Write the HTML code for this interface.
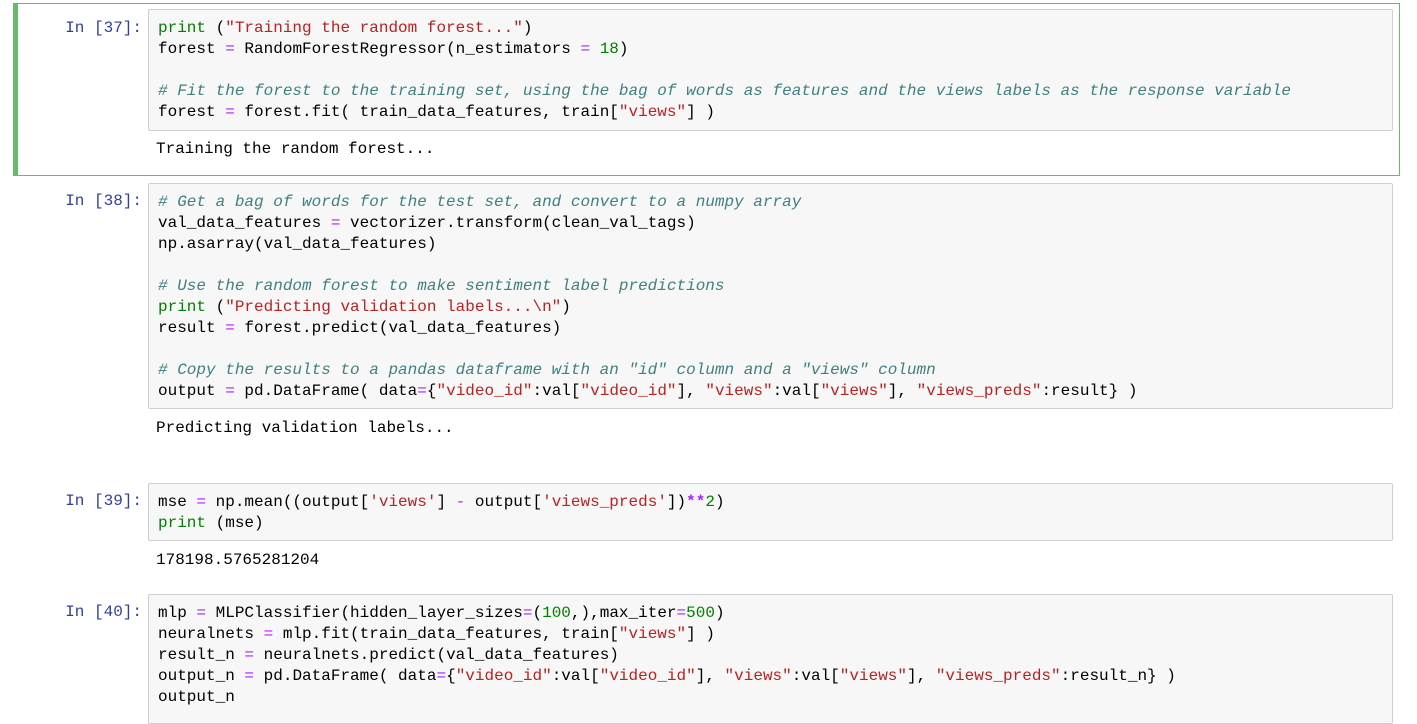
<!DOCTYPE html>
<html><head><meta charset="utf-8"><style>
body{margin:0;width:1417px;height:710px;overflow:hidden;background:#fff;position:relative;font-family:"Liberation Mono",monospace;font-size:16px;}
.sel{position:absolute;left:13px;top:3px;width:1387px;height:173px;border:1px solid #66bb6a;border-left:5px solid #66bb6a;box-sizing:border-box;}
.box{position:absolute;left:148px;width:1245px;background:#f7f7f7;border:1px solid #cfcfcf;border-radius:2px;box-sizing:border-box;padding:8px 0 6px 9px;}
pre{margin:0;font:inherit;line-height:21px;white-space:pre;color:#000;}
.p{position:absolute;left:0;width:142px;text-align:right;color:#303f9f;line-height:21px;}
.o{position:absolute;left:156px;line-height:21px;white-space:pre;}
.k{color:#008000}.s{color:#ba2121}.c{color:#408080;font-style:italic}.op{color:#aa22ff}.n{color:#008000}.b{color:#aa22ff;font-weight:bold}
</style></head><body>
<div class="sel"></div>
<div class="p" style="top:18px">In [37]:</div>
<div class="box" style="top:9px;height:122px"><pre><span class="k">print</span> (<span class="s">"Training the random forest..."</span>)
forest <span class="op">=</span> RandomForestRegressor(n_estimators <span class="op">=</span> <span class="n">18</span>)

<span class="c"># Fit the forest to the training set, using the bag of words as features and the views labels as the response variable</span>
forest <span class="op">=</span> forest.fit( train_data_features, train[<span class="s">"views"</span>] )</pre></div>
<div class="o" style="top:139px">Training the random forest...</div>

<div class="p" style="top:191px">In [38]:</div>
<div class="box" style="top:183px;height:226px"><pre><span class="c"># Get a bag of words for the test set, and convert to a numpy array</span>
val_data_features <span class="op">=</span> vectorizer.transform(clean_val_tags)
np.asarray(val_data_features)

<span class="c"># Use the random forest to make sentiment label predictions</span>
<span class="k">print</span> (<span class="s">"Predicting validation labels...\n"</span>)
result <span class="op">=</span> forest.predict(val_data_features)

<span class="c"># Copy the results to a pandas dataframe with an "id" column and a "views" column</span>
output <span class="op">=</span> pd.DataFrame( data<span class="op">=</span>{<span class="s">"video_id"</span>:val[<span class="s">"video_id"</span>], <span class="s">"views"</span>:val[<span class="s">"views"</span>], <span class="s">"views_preds"</span>:result} )</pre></div>
<div class="o" style="top:418px">Predicting validation labels...</div>

<div class="p" style="top:491px">In [39]:</div>
<div class="box" style="top:483px;height:58px"><pre>mse <span class="op">=</span> np.mean((output[<span class="s">'views'</span>] <span class="op">-</span> output[<span class="s">'views_preds'</span>])<span class="b">**</span><span class="n">2</span>)
<span class="k">print</span> (mse)</pre></div>
<div class="o" style="top:550px">178198.5765281204</div>

<div class="p" style="top:602px">In [40]:</div>
<div class="box" style="top:594px;height:130px"><pre>mlp <span class="op">=</span> MLPClassifier(hidden_layer_sizes<span class="op">=</span>(<span class="n">100</span>,),max_iter<span class="op">=</span><span class="n">500</span>)
neuralnets <span class="op">=</span> mlp.fit(train_data_features, train[<span class="s">"views"</span>] )
result_n <span class="op">=</span> neuralnets.predict(val_data_features)
output_n <span class="op">=</span> pd.DataFrame( data<span class="op">=</span>{<span class="s">"video_id"</span>:val[<span class="s">"video_id"</span>], <span class="s">"views"</span>:val[<span class="s">"views"</span>], <span class="s">"views_preds"</span>:result_n} )
output_n</pre></div>
</body></html>
